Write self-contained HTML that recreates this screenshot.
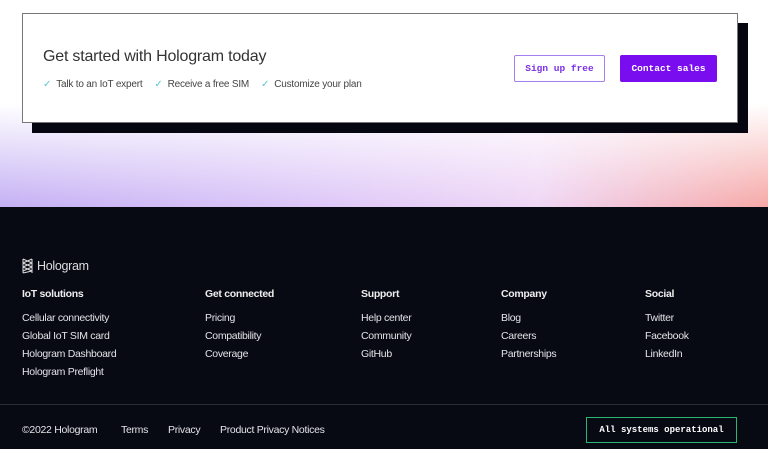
<!DOCTYPE html>
<html><head><style>
*{margin:0;padding:0;box-sizing:border-box}
body{width:768px;height:449px;overflow:hidden;font-family:"Liberation Sans",sans-serif;background:#fff;position:relative}
.top{position:absolute;left:0;top:0;width:768px;height:207px;background:
linear-gradient(180deg,rgba(255,255,255,1) 0%,rgba(255,255,255,1) 50%,rgba(255,255,255,0) 100%),
linear-gradient(90deg,#c4b0f4 0%,#dcc6f8 40%,#efd6f5 70%,#f6a8a6 100%);}
.shadow{position:absolute;left:32px;top:23px;width:716px;height:110px;background:#05060f}
.card{position:absolute;left:22px;top:13px;width:716px;height:110px;background:#fff;border:1px solid #777}
h2{position:absolute;left:20px;top:34px;font-size:16px;font-weight:normal;color:#333;letter-spacing:-0.2px}
.checks{position:absolute;left:20px;top:65px;font-size:10px;color:#444;white-space:nowrap;letter-spacing:-0.2px}
.checks span{margin-right:12px}.checks b{color:#5bc6d0;font-weight:normal;margin-right:5px}
.btn{position:absolute;top:41px;height:27px;font-family:"Liberation Mono",monospace;font-size:9.5px;font-weight:bold;display:flex;align-items:center;justify-content:center;border-radius:2px}
.b1{left:491px;width:91px;border:1.5px solid #a37ff0;color:#7a2fe8}
.b2{left:597px;width:97px;background:#7a0cf0;color:#fff}
.foot{position:absolute;left:0;top:207px;width:768px;height:242px;background:#070913;color:#e4e4e8;font-size:10.5px;letter-spacing:-0.3px}
.logo{position:absolute;left:22px;top:51px;font-size:12.5px;color:#ddd;display:flex;align-items:center;gap:4px}
.col{position:absolute;top:81px}
.col h4{font-size:10.5px;font-weight:bold;margin-bottom:12px;color:#eee}
.col div{margin-bottom:5px;line-height:13px}
.hr{position:absolute;left:0;top:197px;width:768px;height:1px;background:#2a2c38}
.bot{position:absolute;top:217px;font-size:10.5px}
.status{position:absolute;left:586px;top:210px;width:151px;height:26px;border:1.5px solid #2bb673;font-family:"Liberation Mono",monospace;font-size:9px;font-weight:bold;display:flex;align-items:center;justify-content:center;color:#fff;letter-spacing:0}
</style></head><body>
<div class="top"></div>
<div class="shadow"></div>
<div class="card">
<h2>Get started with Hologram today</h2>
<div class="checks"><span><b>✓</b>Talk to an IoT expert</span><span><b>✓</b>Receive a free SIM</span><span><b>✓</b>Customize your plan</span></div>
<div class="btn b1">Sign up free</div>
<div class="btn b2">Contact sales</div>
</div>
<div class="foot">
<div class="logo"><svg width="11" height="16" viewBox="0 0 11 16" fill="none" stroke="#ddd" stroke-width="1"><path d="M1 1v14M10 1v14M1 1l9 4M1 5l9-4M1 5l9 4M1 9l9-4M1 9l9 4M1 13l9-4M1 15l9-2"/></svg>Hologram</div>
<div class="col" style="left:22px"><h4>IoT solutions</h4><div>Cellular connectivity</div><div>Global IoT SIM card</div><div>Hologram Dashboard</div><div>Hologram Preflight</div></div>
<div class="col" style="left:205px"><h4>Get connected</h4><div>Pricing</div><div>Compatibility</div><div>Coverage</div></div>
<div class="col" style="left:361px"><h4>Support</h4><div>Help center</div><div>Community</div><div>GitHub</div></div>
<div class="col" style="left:501px"><h4>Company</h4><div>Blog</div><div>Careers</div><div>Partnerships</div></div>
<div class="col" style="left:645px"><h4>Social</h4><div>Twitter</div><div>Facebook</div><div>LinkedIn</div></div>
<div class="hr"></div>
<div class="bot" style="left:22px">©2022 Hologram</div>
<div class="bot" style="left:121px">Terms</div>
<div class="bot" style="left:168px">Privacy</div>
<div class="bot" style="left:220px">Product Privacy Notices</div>
<div class="status">All systems operational</div>
</div>
</body></html>
